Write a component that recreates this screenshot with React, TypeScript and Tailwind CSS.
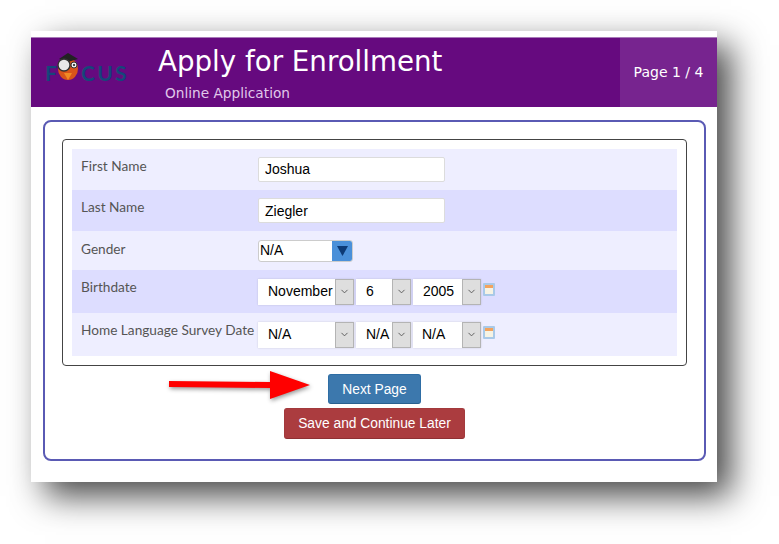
import { ChevronDown } from "lucide-react"

function TextField({ value, top }: { value: string; top: string }) {
  return (
    <div className={`ml-[1px] w-[187px] h-[25px] bg-white border border-[#dcdcdc] rounded-[2px] pl-[6px] ${top} flex items-center text-[14px] text-black font-['Liberation_Sans',sans-serif]`}>
      {value}
    </div>
  )
}

function DatePart({ value, textW, pad }: { value: string; textW: string; pad: string }) {
  return (
    <div className="flex h-[26px] shadow-[0_0_2px_rgba(0,0,0,0.14)]">
      <div className={`${textW} ${pad} bg-white flex items-center text-[14px] text-black whitespace-nowrap font-['Liberation_Sans',sans-serif]`}>
        {value}
      </div>
      <div className="w-[19px] bg-[#dedede] border border-[#b4b4b4] flex items-center justify-center">
        <ChevronDown size={11} strokeWidth={2} className="text-[#555]" />
      </div>
    </div>
  )
}

function CalendarIcon() {
  return (
    <svg width="12" height="13" viewBox="0 0 12 13" className="-mt-[4px]">
      <rect x="0" y="0" width="12" height="13" rx="1" fill="#a9c9e8" />
      <rect x="2" y="2" width="8" height="3" fill="#f2a35e" />
      <rect x="2" y="5" width="8" height="6" fill="#f6f3e4" />
    </svg>
  )
}

function Row({ label, bg, h, labelTop, children }: { label: string; bg: string; h: string; labelTop: string; children: React.ReactNode }) {
  return (
    <div className={`flex ${bg} ${h}`}>
      <div className={`w-[185px] pl-[9px] ${labelTop} text-[13.65px] leading-[18px] text-[#555] whitespace-nowrap font-['Lato',sans-serif]`}>
        {label}
      </div>
      <div className="flex items-center">{children}</div>
    </div>
  )
}

function DateFields({ values }: { values: [string, string, string] }) {
  const isEmpty = values[0] === "N/A"
  return (
    <div className="ml-[1px] flex items-center gap-[2px]">
      <DatePart value={values[0]} textW="w-[77px]" pad="pl-[10px]" />
      <DatePart value={values[1]} textW="w-[36px]" pad="pl-[10px]" />
      <DatePart value={values[2]} textW="w-[49px]" pad={isEmpty ? "pl-[9px]" : "pl-[10px]"} />
      <CalendarIcon />
    </div>
  )
}

export default function App() {
  return (
    <div className="relative w-[779px] h-[544px] bg-white overflow-hidden pl-[31px] pt-[31px] font-['DejaVu_Sans',sans-serif]">
      <div className="w-[686px] h-[451px] bg-white pt-[6px] shadow-[14px_14px_32px_rgba(0,0,0,0.72)]">
        <header className="h-[70px] flex bg-[#660a7f] border-t border-[#a87bb8]">
          <div className="w-[126px] flex items-center pl-[14px]">
            <div className="relative text-[21px] font-bold tracking-[2.2px] text-[#16467a] font-['Lato',sans-serif] pt-[1px]">
              F<span className="inline-block w-[22px]" />CUS
              <svg width="25" height="28" viewBox="0 0 25 28" className="absolute left-[10px] top-[-3px]">
                <ellipse cx="13" cy="16" rx="10" ry="11" fill="#d9541a" />
                <path d="M9 20 L17 20 L13 27 Z" fill="#f08a24" />
                <path d="M4 6 L13 0 L23 6 L13 9 Z" fill="#222" />
                <circle cx="9" cy="12" r="6" fill="#e8e8e8" stroke="#333" strokeWidth="1.4" />
                <circle cx="19" cy="12" r="3" fill="#eee" stroke="#333" />
                <circle cx="19" cy="12" r="1" fill="#111" />
              </svg>
            </div>
          </div>
          <div className="flex-1 pt-[6px]">
            <div className="pl-[1px] text-[27.7px] leading-[36px] text-white whitespace-nowrap">Apply for Enrollment</div>
            <div className="pl-[8px] mt-[4px] text-[13.7px] leading-[18px] text-[#e0c8ea] whitespace-nowrap">Online Application</div>
          </div>
          <div className="w-[97px] bg-[#77248f] flex items-center justify-center text-[14px] text-white whitespace-nowrap">Page 1 / 4</div>
        </header>

        <main className="ml-[12px] mr-[11px] mt-[13px] h-[341px] border-2 border-[#5a5ab4] rounded-[8px] bg-white pt-[17px] px-[17px]">
          <div className="h-[227px] border border-[#444] rounded-[4px] pt-[9px] px-[9px]">
            <Row label="First Name" bg="bg-[#eeeeff]" h="h-[41px]" labelTop="pt-[8px]">
              <TextField value="Joshua" top="pt-0" />
            </Row>
            <Row label="Last Name" bg="bg-[#ddddff]" h="h-[41px]" labelTop="pt-[8px]">
              <TextField value="Ziegler" top="pt-[1px]" />
            </Row>
            <Row label="Gender" bg="bg-[#eeeeff]" h="h-[39px]" labelTop="pt-[9px]">
              <div className="ml-[1px] w-[95px] h-[22px] flex bg-white border border-[#ccc] rounded-[3px] overflow-hidden text-[14px] text-black font-['Liberation_Sans',sans-serif]">
                <div className="flex-1 pl-[1px] flex items-center">N/A</div>
                <div className="w-[20px] bg-[#4a90d9] flex items-center justify-center">
                  <svg width="11" height="10" viewBox="0 0 11 10"><path d="M0 0 H11 L5.5 10 Z" fill="#0d3a75" /></svg>
                </div>
              </div>
            </Row>
            <Row label="Birthdate" bg="bg-[#ddddff]" h="h-[43px]" labelTop="pt-[8px]">
              <DateFields values={["November", "6", "2005"]} />
            </Row>
            <Row label="Home Language Survey Date" bg="bg-[#eeeeff]" h="h-[43px]" labelTop="pt-[8px]">
              <DateFields values={["N/A", "N/A", "N/A"]} />
            </Row>
          </div>

          <div className="flex flex-col items-center gap-[4px] mt-[8px] font-['Liberation_Sans',sans-serif] text-[13.8px] text-white">
            <button className="w-[93px] h-[30px] pt-[2px] rounded-[3px] bg-[#3c78ad] border border-[#2e6da4] border-b-[#28608f]">Next Page</button>
            <button className="w-[181px] h-[31px] pt-[1px] rounded-[3px] bg-[#ab3c3f] border border-[#a33a3d] border-b-[#8f3033]">Save and Continue Later</button>
          </div>
        </main>
      </div>

      <svg width="150" height="34" viewBox="0 0 150 34" className="absolute left-[166px] top-[369px] drop-shadow-[1px_2px_2px_rgba(0,0,0,0.4)]">
        <path d="M3 12 L104 13 L104 2 L144 16 L104 30 L104 19 L3 18 Z" fill="#ff0000" />
      </svg>
    </div>
  )
}
